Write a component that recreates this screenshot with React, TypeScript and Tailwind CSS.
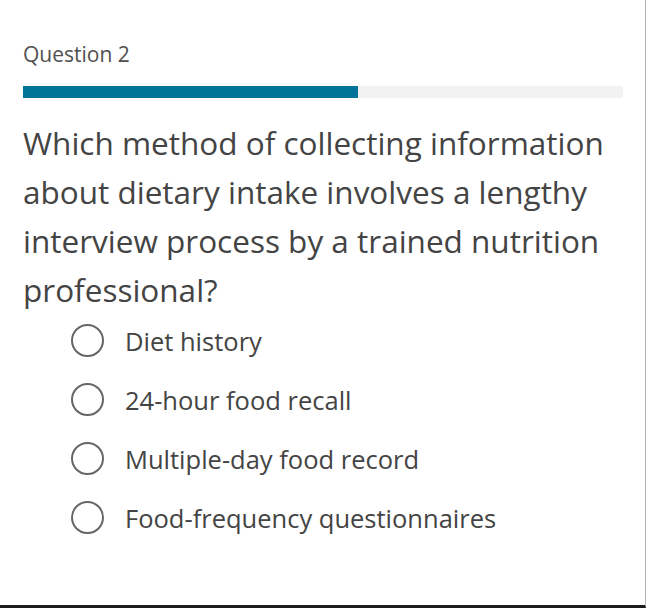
const options = [
  "Diet history",
  "24-hour food recall",
  "Multiple-day food record",
  "Food-frequency questionnaires",
];

export default function App(): JSX.Element {
  return (
    <div className="w-[646px] h-[608px] bg-white border-r border-r-[#b5b5b5] border-b-[3px] border-b-[#1c1c1c] font-['Open_Sans',sans-serif] text-[#444]">
      <div className="pl-[23px] pr-[23px] pt-[40px]">
        {/* Header */}
        <div className="text-[21px] leading-[28px] text-[#505050]">Question 2</div>

        {/* Progress */}
        <div className="mt-[18px] h-[12px] w-[600px] bg-[#f2f2f2] flex">
          <div className="h-full w-[335px] bg-[#007398]" />
        </div>

        {/* Question text */}
        <div className="mt-[20px] text-[31.5px] leading-[49px] text-[#444]">
          Which method of collecting information about dietary intake involves a lengthy interview process by a
          trained nutrition professional?
        </div>

        {/* Options */}
        <div className="mt-[10px] flex flex-col gap-[26px] pl-[48px]">
          {options.map((opt) => (
            <label key={opt} className="flex items-center gap-[21px] cursor-pointer">
              <span className="w-[33px] h-[33px] rounded-full border-[2.5px] border-[#666] shrink-0" />
              <span className="text-[25.5px] leading-[32px] text-[#444]">{opt}</span>
            </label>
          ))}
        </div>
      </div>
    </div>
  );
}
